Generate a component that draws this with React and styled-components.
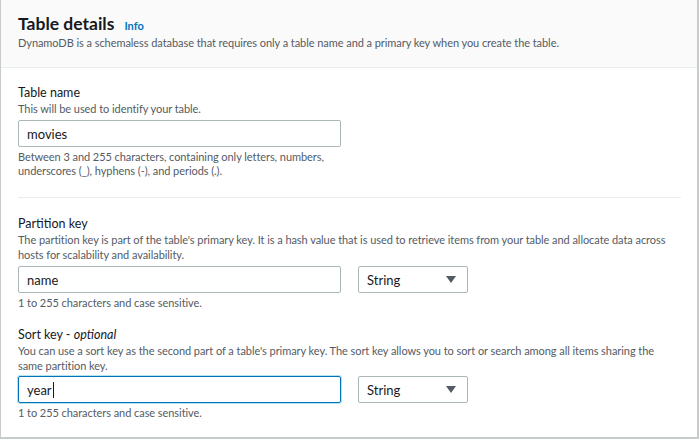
import React from 'react';
import styled, { createGlobalStyle } from 'styled-components';

const GlobalStyle = createGlobalStyle`
  html, body {
    margin: 0;
    padding: 0;
    background: #ffffff;
  }
  body {
    font-family: Lato, "Liberation Sans", sans-serif;
    color: #16191f;
  }
  * {
    box-sizing: border-box;
  }
`;

const Panel = styled.div`
  width: 699px;
  height: 439px;
  border: 1px solid #c6cbcc;
  border-top: none;
  border-right-width: 2px;
  border-bottom-width: 2px;
  background: #ffffff;
  display: flex;
  flex-direction: column;
`;

const Header = styled.div`
  height: 68px;
  padding: 13px 17px 0;
  background: #fafafa;
  border-bottom: 1px solid #eaeded;
`;

const TitleRow = styled.div`
  display: flex;
  align-items: baseline;
  gap: 10px;
`;

const Title = styled.h2`
  margin: 0;
  font-size: 17.5px;
  line-height: 22px;
  font-weight: 700;
  color: #16191f;
`;

const InfoLink = styled.a`
  font-size: 11px;
  font-weight: 700;
  color: #0073bb;
  text-decoration: none;
`;

const HeaderText = styled.p`
  margin: 0;
  font-size: 11px;
  line-height: 15px;
  letter-spacing: -0.06px;
  color: #545b64;
`;

const Body = styled.div`
  padding: 16px 10px 0 17px;
  display: flex;
  flex-direction: column;
`;

const Field = styled.div`
  display: flex;
  flex-direction: column;
  margin-bottom: ${p => p.$gap || 0}px;
`;

const Label = styled.label`
  font-size: 12.5px;
  line-height: 17px;
  color: #16191f;
`;

const Optional = styled.i`
  font-style: italic;
`;

const Description = styled.p`
  margin: 0;
  font-size: 11px;
  line-height: ${p => p.$tight ? 14 : 15}px;
  letter-spacing: -0.06px;
  color: #545b64;
  max-width: ${p => p.$narrow ? '340px' : '662px'};
`;

const Controls = styled.div`
  display: flex;
  gap: 17px;
  margin: ${p => p.$top}px 0 ${p => p.$bottom}px;
`;

const Input = styled.div`
  width: 323px;
  height: 27px;
  border: 1px solid ${p => p.$focused ? '#0073bb' : '#aab7b8'};
  box-shadow: ${p => p.$focused ? '0 0 0 1px rgba(0, 161, 201, 0.3)' : 'none'};
  border-radius: 2px;
  padding: 0 8px;
  display: flex;
  align-items: center;
  font-size: 13px;
  color: #16191f;
`;

const Caret = styled.span`
  display: inline-block;
  width: 1px;
  height: 16px;
  background: #16191f;
  margin-left: 1px;
`;

const Select = styled.div`
  width: 110px;
  height: 27px;
  border: 1px solid #aab7b8;
  border-radius: 2px;
  padding: 0 11px 0 8px;
  display: flex;
  align-items: center;
  justify-content: space-between;
  font-size: 13px;
  color: #16191f;
`;

const Arrow = styled.svg`
  width: 10px;
  height: 7px;
  fill: #545b64;
`;

const Divider = styled.hr`
  margin: 0 0 17px;
  border: none;
  border-top: 1px solid #eaeded;
  width: 663px;
`;

const TypeSelect = () => (
  <Select>
    String
    <Arrow viewBox="0 0 10 7">
      <path d="M0 0 H10 L5 7 Z" />
    </Arrow>
  </Select>
);

const App = () => (
  <>
    <GlobalStyle />
    <Panel>
      <Header>
        <TitleRow>
          <Title>Table details</Title>
          <InfoLink href="#">Info</InfoLink>
        </TitleRow>
        <HeaderText>
          DynamoDB is a schemaless database that requires only a table name and a primary key when you create the table.
        </HeaderText>
      </Header>
      <Body>
        <Field $gap={19}>
          <Label>Table name</Label>
          <Description>This will be used to identify your table.</Description>
          <Controls $top={4} $bottom={3}>
            <Input>movies</Input>
          </Controls>
          <Description $narrow $tight>
            Between 3 and 255 characters, containing only letters, numbers, underscores (_), hyphens (-), and periods (.).
          </Description>
        </Field>
        <Divider />
        <Field $gap={16}>
          <Label>Partition key</Label>
          <Description>
            The partition key is part of the table's primary key. It is a hash value that is used to retrieve items from your table and allocate data across hosts for scalability and availability.
          </Description>
          <Controls $top={4} $bottom={2}>
            <Input>name</Input>
            <TypeSelect />
          </Controls>
          <Description>1 to 255 characters and case sensitive.</Description>
        </Field>
        <Field>
          <Label>
            Sort key - <Optional>optional</Optional>
          </Label>
          <Description>
            You can use a sort key as the second part of a table's primary key. The sort key allows you to sort or search among all items sharing the same partition key.
          </Description>
          <Controls $top={3} $bottom={2}>
            <Input $focused>
              year<Caret />
            </Input>
            <TypeSelect />
          </Controls>
          <Description>1 to 255 characters and case sensitive.</Description>
        </Field>
      </Body>
    </Panel>
  </>
);

export default App;
